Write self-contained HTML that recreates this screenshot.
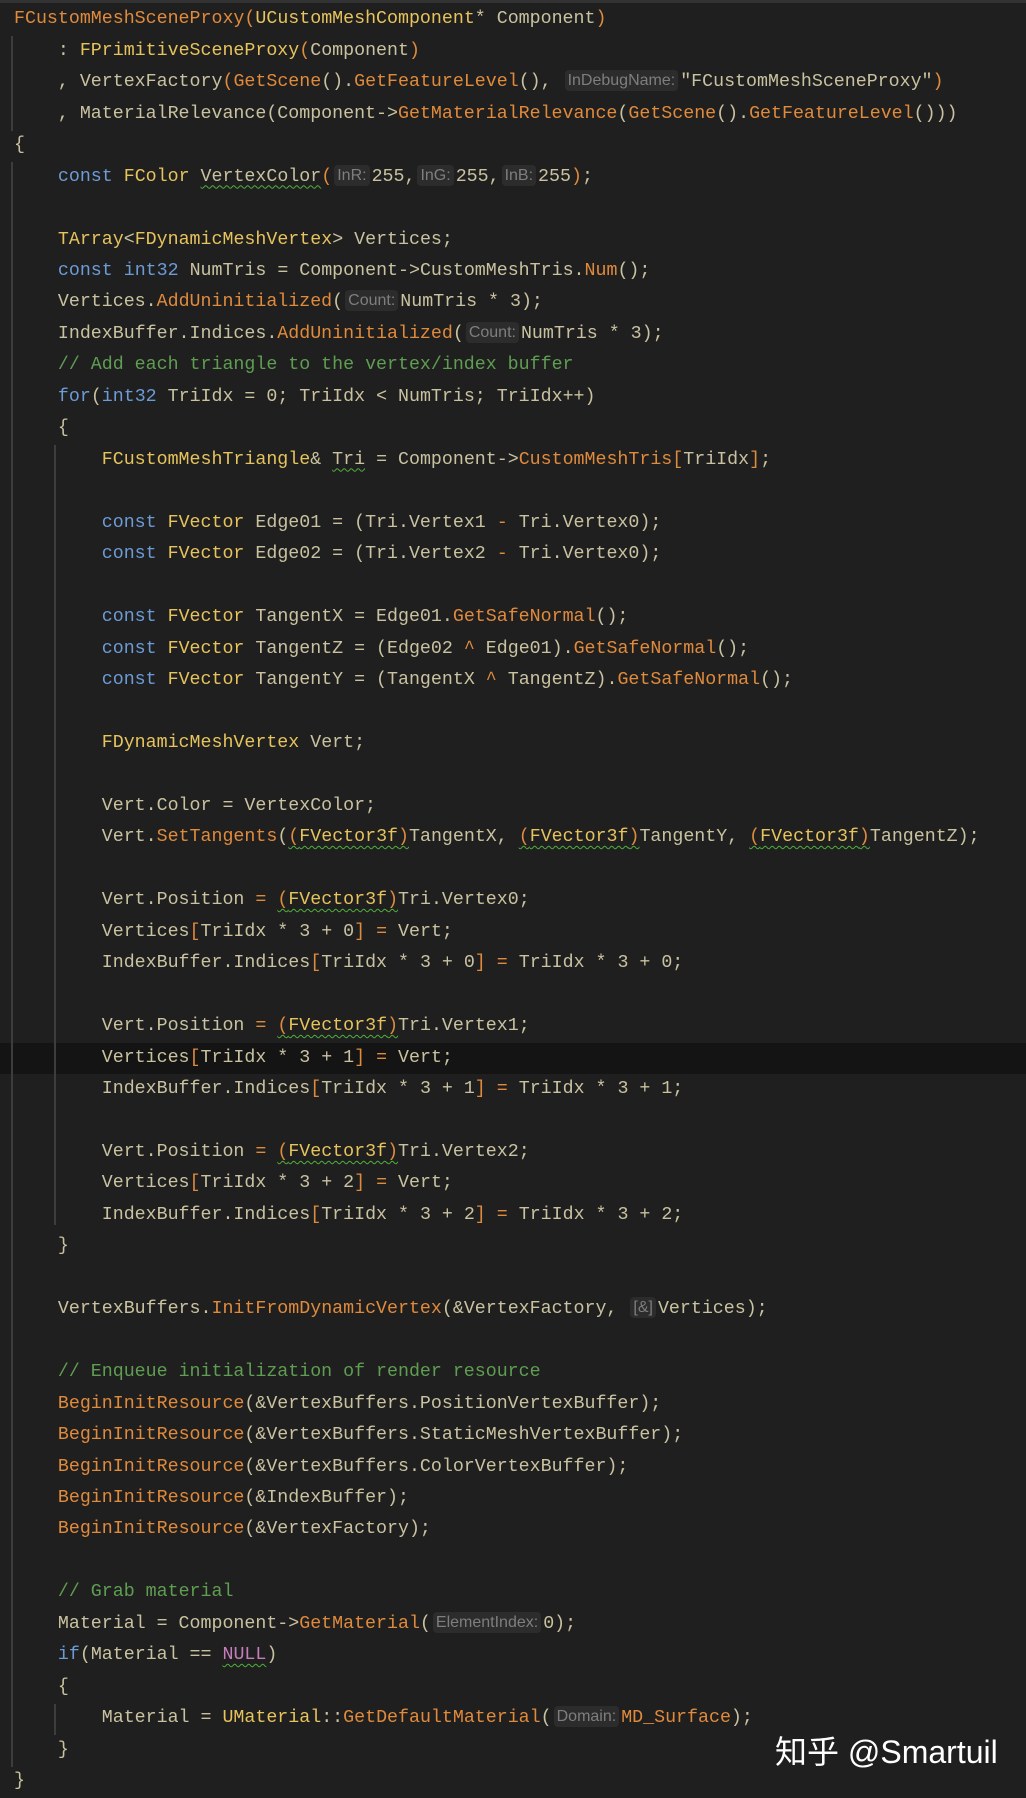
<!DOCTYPE html>
<html><head><meta charset="utf-8"><style>
html,body{margin:0;padding:0;}
body{width:1026px;height:1795px;background:#1f1f1f;position:relative;overflow:hidden;}
.l{position:absolute;left:14px;height:31.46px;line-height:31.46px;white-space:pre;font-family:"Liberation Mono",monospace;font-size:18.3px;color:#c9c2a0;}
.k{color:#6c9bd6}.t{color:#e6c35c}.f{color:#e08a3c}.c{color:#5f9e52}.s{color:#c9c2a0}.o{color:#e08a3c}.m{color:#c77dbb}
.h{display:inline-block;font-family:"Liberation Sans",sans-serif;font-size:16px;color:#7e7e7e;background:#2c2c2c;border-radius:4px;line-height:21px;padding:0 3px;margin:0 2px;vertical-align:1px;}
.w{text-decoration:underline wavy #4fb03c;text-decoration-thickness:1px;text-underline-offset:4px;}
.g{position:absolute;width:2px;background:#3d3d3d;}
.hl{position:absolute;left:0;width:1026px;top:1043px;height:31px;background:#141414;}
.wm{position:absolute;left:775px;top:1727px;font-family:"Liberation Sans","Noto Sans CJK SC",sans-serif;font-size:32px;color:#fff;}
</style></head><body>
<div style="position:absolute;left:0;top:0;width:1026px;height:3px;background:#333"></div>
<div class="hl"></div>
<div class="g" style="left:11px;top:36px;height:95px"></div>
<div class="g" style="left:11px;top:162px;height:1605px"></div>
<div class="g" style="left:54px;top:445px;height:780px"></div>
<div class="g" style="left:54px;top:1704px;height:31px"></div>
<div class="l" style="top:4.3px"><span class="f">FCustomMeshSceneProxy</span><span class="o">(</span><span class="t">UCustomMeshComponent</span>* Component<span class="o">)</span></div>
<div class="l" style="top:35.8px">    : <span class="t">FPrimitiveSceneProxy</span><span class="o">(</span>Component<span class="o">)</span></div>
<div class="l" style="top:67.2px">    , VertexFactory<span class="o">(</span><span class="f">GetScene</span>().<span class="f">GetFeatureLevel</span>(), <span class="h">InDebugName:</span>"FCustomMeshSceneProxy"<span class="o">)</span></div>
<div class="l" style="top:98.7px">    , MaterialRelevance(Component-&gt;<span class="f">GetMaterialRelevance</span>(<span class="f">GetScene</span>().<span class="f">GetFeatureLevel</span>()))</div>
<div class="l" style="top:130.1px">{</div>
<div class="l" style="top:161.6px">    <span class="k">const</span> <span class="t">FColor</span> <span class="w">VertexColor</span><span class="o">(</span><span class="h">InR:</span>255,<span class="h">InG:</span>255,<span class="h">InB:</span>255<span class="o">)</span>;</div>
<div class="l" style="top:224.5px">    <span class="t">TArray</span>&lt;<span class="t">FDynamicMeshVertex</span>&gt; Vertices;</div>
<div class="l" style="top:255.9px">    <span class="k">const</span> <span class="k">int32</span> NumTris = Component-&gt;CustomMeshTris.<span class="f">Num</span>();</div>
<div class="l" style="top:287.4px">    Vertices.<span class="f">AddUninitialized</span>(<span class="h">Count:</span>NumTris * 3);</div>
<div class="l" style="top:318.9px">    IndexBuffer.Indices.<span class="f">AddUninitialized</span>(<span class="h">Count:</span>NumTris * 3);</div>
<div class="l" style="top:350.3px">    <span class="c">// Add each triangle to the vertex/index buffer</span></div>
<div class="l" style="top:381.8px">    <span class="k">for</span>(<span class="k">int32</span> TriIdx = 0; TriIdx &lt; NumTris; TriIdx++)</div>
<div class="l" style="top:413.3px">    {</div>
<div class="l" style="top:444.7px">        <span class="t">FCustomMeshTriangle</span>&amp; <span class="w">Tri</span> = Component-&gt;<span class="f">CustomMeshTris</span><span class="o">[</span>TriIdx<span class="o">]</span>;</div>
<div class="l" style="top:507.6px">        <span class="k">const</span> <span class="t">FVector</span> Edge01 = (Tri.Vertex1 <span class="o">-</span> Tri.Vertex0);</div>
<div class="l" style="top:539.1px">        <span class="k">const</span> <span class="t">FVector</span> Edge02 = (Tri.Vertex2 <span class="o">-</span> Tri.Vertex0);</div>
<div class="l" style="top:602.0px">        <span class="k">const</span> <span class="t">FVector</span> TangentX = Edge01.<span class="f">GetSafeNormal</span>();</div>
<div class="l" style="top:633.5px">        <span class="k">const</span> <span class="t">FVector</span> TangentZ = (Edge02 <span class="o">^</span> Edge01).<span class="f">GetSafeNormal</span>();</div>
<div class="l" style="top:664.9px">        <span class="k">const</span> <span class="t">FVector</span> TangentY = (TangentX <span class="o">^</span> TangentZ).<span class="f">GetSafeNormal</span>();</div>
<div class="l" style="top:727.9px">        <span class="t">FDynamicMeshVertex</span> Vert;</div>
<div class="l" style="top:790.8px">        Vert.Color = VertexColor;</div>
<div class="l" style="top:822.2px">        Vert.<span class="f">SetTangents</span>(<span class="w"><span class="o">(</span><span class="t">FVector3f</span><span class="o">)</span></span>TangentX, <span class="w"><span class="o">(</span><span class="t">FVector3f</span><span class="o">)</span></span>TangentY, <span class="w"><span class="o">(</span><span class="t">FVector3f</span><span class="o">)</span></span>TangentZ);</div>
<div class="l" style="top:885.2px">        Vert.Position <span class="o">=</span> <span class="w"><span class="o">(</span><span class="t">FVector3f</span><span class="o">)</span></span>Tri.Vertex0;</div>
<div class="l" style="top:916.6px">        Vertices<span class="o">[</span>TriIdx * 3 + 0<span class="o">]</span> <span class="o">=</span> Vert;</div>
<div class="l" style="top:948.1px">        IndexBuffer.Indices<span class="o">[</span>TriIdx * 3 + 0<span class="o">]</span> <span class="o">=</span> TriIdx * 3 + 0;</div>
<div class="l" style="top:1011.0px">        Vert.Position <span class="o">=</span> <span class="w"><span class="o">(</span><span class="t">FVector3f</span><span class="o">)</span></span>Tri.Vertex1;</div>
<div class="l" style="top:1042.5px">        Vertices<span class="o">[</span>TriIdx * 3 + 1<span class="o">]</span> <span class="o">=</span> Vert;</div>
<div class="l" style="top:1073.9px">        IndexBuffer.Indices<span class="o">[</span>TriIdx * 3 + 1<span class="o">]</span> <span class="o">=</span> TriIdx * 3 + 1;</div>
<div class="l" style="top:1136.9px">        Vert.Position <span class="o">=</span> <span class="w"><span class="o">(</span><span class="t">FVector3f</span><span class="o">)</span></span>Tri.Vertex2;</div>
<div class="l" style="top:1168.3px">        Vertices<span class="o">[</span>TriIdx * 3 + 2<span class="o">]</span> <span class="o">=</span> Vert;</div>
<div class="l" style="top:1199.8px">        IndexBuffer.Indices<span class="o">[</span>TriIdx * 3 + 2<span class="o">]</span> <span class="o">=</span> TriIdx * 3 + 2;</div>
<div class="l" style="top:1231.2px">    }</div>
<div class="l" style="top:1294.2px">    VertexBuffers.<span class="f">InitFromDynamicVertex</span>(&amp;VertexFactory, <span class="h">[&amp;]</span>Vertices);</div>
<div class="l" style="top:1357.1px">    <span class="c">// Enqueue initialization of render resource</span></div>
<div class="l" style="top:1388.5px">    <span class="f">BeginInitResource</span>(&amp;VertexBuffers.PositionVertexBuffer);</div>
<div class="l" style="top:1420.0px">    <span class="f">BeginInitResource</span>(&amp;VertexBuffers.StaticMeshVertexBuffer);</div>
<div class="l" style="top:1451.5px">    <span class="f">BeginInitResource</span>(&amp;VertexBuffers.ColorVertexBuffer);</div>
<div class="l" style="top:1482.9px">    <span class="f">BeginInitResource</span>(&amp;IndexBuffer);</div>
<div class="l" style="top:1514.4px">    <span class="f">BeginInitResource</span>(&amp;VertexFactory);</div>
<div class="l" style="top:1577.3px">    <span class="c">// Grab material</span></div>
<div class="l" style="top:1608.8px">    Material = Component-&gt;<span class="f">GetMaterial</span>(<span class="h">ElementIndex:</span>0);</div>
<div class="l" style="top:1640.2px">    <span class="k">if</span>(Material == <span class="m w">NULL</span>)</div>
<div class="l" style="top:1671.7px">    {</div>
<div class="l" style="top:1703.2px">        Material = <span class="t">UMaterial</span>::<span class="f">GetDefaultMaterial</span>(<span class="h">Domain:</span><span class="f">MD_Surface</span>);</div>
<div class="l" style="top:1734.6px">    }</div>
<div class="l" style="top:1766.1px">}</div>
<div class="wm">知乎 @Smartuil</div>
</body></html>
